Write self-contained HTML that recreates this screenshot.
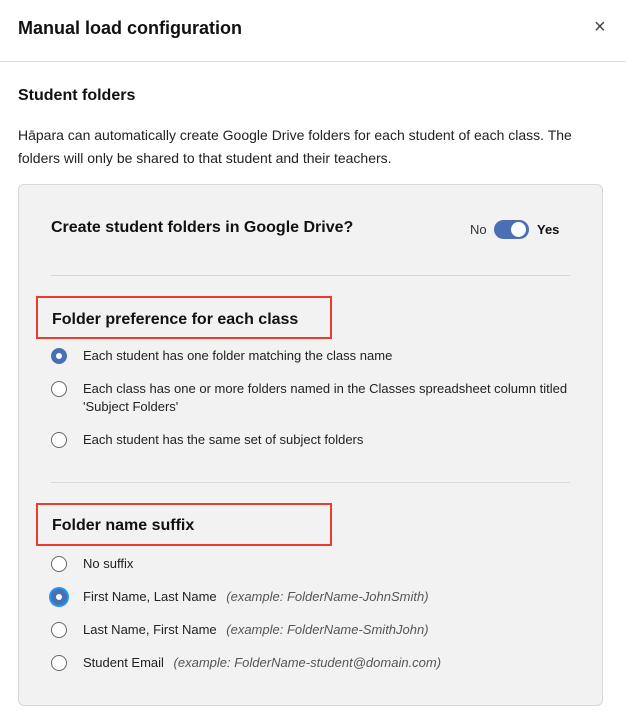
<!DOCTYPE html><html><head><style>
body{margin:0;width:626px;height:715px;background:#fff;font-family:"Liberation Sans",Arial,sans-serif;color:#111;position:relative;overflow:hidden}
.a{position:absolute;white-space:nowrap}
.r{position:absolute;left:51px;width:16px;height:16px;border:1px solid #666;border-radius:50%;background:#fff;box-sizing:border-box}
.r.on{border:5px solid #4a6fb5;}
.t{position:absolute;left:83px;font-size:13px;color:#222;line-height:18px}
.t i{color:#555;margin-left:6px}
.rb{position:absolute;left:36px;width:296px;height:43px;border:2px solid #ee3b2f;box-sizing:border-box}
.h{position:absolute;left:52px;font-size:16px;font-weight:bold}
</style></head><body>
<div class="a" style="left:18px;top:18px;font-size:18px;font-weight:bold">Manual load configuration</div>
<div class="a" style="left:594px;top:16px;font-size:20px;color:#444">×</div>
<div class="a" style="left:0;top:61px;width:626px;height:1px;background:#ddd"></div>
<div class="a" style="left:18px;top:87px;font-size:16px;font-weight:bold">Student folders</div>
<div class="a" style="left:18px;top:124px;font-size:14px;line-height:23px;color:#222">Hāpara can automatically create Google Drive folders for each student of each class. The<br>folders will only be shared to that student and their teachers.</div>
<div class="a" style="left:18px;top:184px;width:585px;height:522px;background:#f2f2f2;border:1px solid #d8d8d8;border-radius:6px;box-sizing:border-box"></div>
<div class="a" style="left:51px;top:219px;font-size:16px;font-weight:bold">Create student folders in Google Drive?</div>
<div class="a" style="left:470px;top:222px;font-size:13px;color:#333">No</div>
<div class="a" style="left:494px;top:220px;width:35px;height:19px;border-radius:10px;background:#4a6fb5"></div>
<div class="a" style="left:511px;top:222px;width:15px;height:15px;border-radius:50%;background:#fff"></div>
<div class="a" style="left:537px;top:222px;font-size:13px;font-weight:bold">Yes</div>
<div class="a" style="left:51px;top:275px;width:519px;height:1px;background:#d8d8d8"></div>
<div class="rb" style="top:296px"></div>
<div class="h" style="top:311px">Folder preference for each class</div>
<div class="r on" style="top:348px"></div><div class="t" style="top:347px">Each student has one folder matching the class name</div>
<div class="r" style="top:381px"></div><div class="t" style="top:380px">Each class has one or more folders named in the Classes spreadsheet column titled<br>'Subject Folders'</div>
<div class="r" style="top:432px"></div><div class="t" style="top:431px">Each student has the same set of subject folders</div>
<div class="a" style="left:51px;top:482px;width:519px;height:1px;background:#d8d8d8"></div>
<div class="rb" style="top:503px"></div>
<div class="h" style="top:517px">Folder name suffix</div>
<div class="r" style="top:556px"></div><div class="t" style="top:555px">No suffix</div>
<div class="r on" style="top:589px;box-shadow:0 0 0 2px #2196f3"></div><div class="t" style="top:588px">First Name, Last Name <i>(example: FolderName-JohnSmith)</i></div>
<div class="r" style="top:622px"></div><div class="t" style="top:621px">Last Name, First Name <i>(example: FolderName-SmithJohn)</i></div>
<div class="r" style="top:655px"></div><div class="t" style="top:654px">Student Email <i>(example: FolderName-student@domain.com)</i></div>
</body></html>
